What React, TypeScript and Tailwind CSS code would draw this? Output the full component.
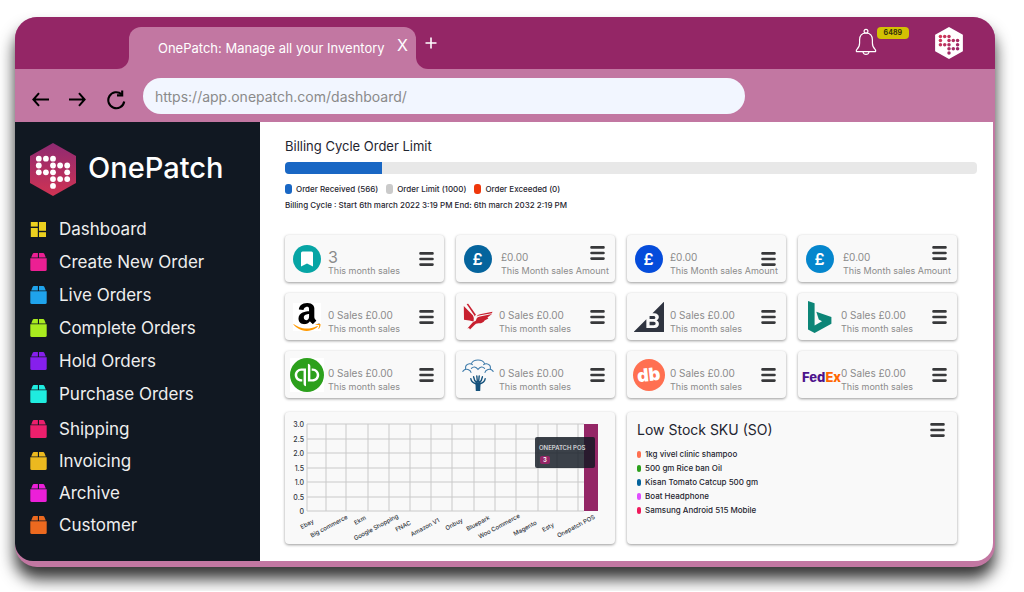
import type { ReactNode } from 'react';
import { FaAmazon } from 'react-icons/fa';
import { SiBigcommerce, SiQuickbooks } from 'react-icons/si';

type NavItem = { label: string; color: string };

type SalesCard = {
  id: string;
  icon: ReactNode;
  value: string;
  caption: string;
  big?: boolean;
  raised?: boolean;
};

const orderNav: NavItem[] = [
  { label: 'Create New Order', color: 'text-[#ec1f93]' },
  { label: 'Live Orders', color: 'text-[#1fa3ec]' },
  { label: 'Complete Orders', color: 'text-[#a9ec1f]' },
  { label: 'Hold Orders', color: 'text-[#861fec]' },
  { label: 'Purchase Orders', color: 'text-[#1fecdf]' },
];

const moreNav: NavItem[] = [
  { label: 'Shipping', color: 'text-[#ec1f6c]' },
  { label: 'Invoicing', color: 'text-[#ecb91f]' },
  { label: 'Archive', color: 'text-[#ec1fd8]' },
  { label: 'Customer', color: 'text-[#ec691f]' },
];

const legend = [
  { label: 'Order Received (566)', color: 'bg-[#1967c4]' },
  { label: 'Order Limit (1000)', color: 'bg-[#cacaca]' },
  { label: 'Order Exceeded (0)', color: 'bg-[#ef370b]' },
];

const lowStock = [
  { label: '1kg vivel clinic shampoo', color: 'bg-[#ff7051]' },
  { label: '500 gm Rice ban Oil', color: 'bg-[#2ca01c]' },
  { label: 'Kisan Tomato Catcup 500 gm', color: 'bg-[#05649d]' },
  { label: 'Boat Headphone', color: 'bg-[#e04dff]' },
  { label: 'Samsung Android 515 Mobile', color: 'bg-[#f01a5b]' },
];

// Dot positions (column, row) of the logo
const logoDots = [
  [0, 0], [1, 0], [2, 0],
  [0, 1], [2, 1], [3, 1], [4, 1],
  [0, 2], [1, 2], [2, 2], [4, 2],
  [2, 3], [3, 3], [4, 3],
  [2, 4],
];

function Logo({ className, inverted }: { className: string; inverted?: boolean }) {
  return (
    <svg className={className} viewBox="0 0 46 53" aria-hidden="true">
      <defs>
        <linearGradient id="brand" x1="0" y1="0" x2="0" y2="53" gradientUnits="userSpaceOnUse">
          <stop offset="0" stopColor="#8f2a72" />
          <stop offset="1" stopColor="#d03353" />
        </linearGradient>
        <linearGradient id="brandDots" x1="8" y1="12" x2="38" y2="40" gradientUnits="userSpaceOnUse">
          <stop offset="0" stopColor="#d63a57" />
          <stop offset="1" stopColor="#96266a" />
        </linearGradient>
      </defs>
      <polygon points="23,0 46,13 46,40 23,53 0,40 0,13" fill={inverted ? '#fff' : 'url(#brand)'} />
      <g fill={inverted ? 'url(#brandDots)' : '#fff'}>
        {logoDots.map(([col, row]) => (
          <circle key={`${col}-${row}`} cx={8.8 + col * 7.1} cy={15.7 + row * 6.8} r="2.9" />
        ))}
      </g>
    </svg>
  );
}

function BoxIcon() {
  return (
    <svg className="w-[17px] h-[18px]" viewBox="0 0 17 18" fill="currentColor" aria-hidden="true">
      <path d="M4 0H7.9V4.4H1.2L2.6 1.1Q3 0 4 0ZM9 0H13Q14 0 14.4 1.1L15.8 4.4H9Z" />
      <path d="M0.3 5.2H16.7V16.5Q16.7 18 15.2 18H1.8Q0.3 18 0.3 16.5Z" />
    </svg>
  );
}

function DashboardIcon() {
  return (
    <svg className="w-[17px] h-[17px]" viewBox="0 0 17 17" fill="currentColor" aria-hidden="true">
      <rect x="0.8" y="1" width="7" height="4.6" />
      <rect x="0.8" y="7" width="7" height="9" />
      <rect x="9" y="1" width="7" height="8.8" />
      <rect x="9" y="11.2" width="7" height="4.8" />
    </svg>
  );
}

function MenuButton({ label, className = '' }: { label: string; className?: string }) {
  return (
    <button type="button" aria-label={label} className={`shrink-0 ${className}`}>
      <svg className="w-[15px] h-[14px] block" viewBox="0 0 15 14" stroke="#38393b" strokeWidth="2.6" strokeLinecap="round">
        <path d="M1.5 1.4H13.5M1.5 7H13.5M1.5 12.6H13.5" />
      </svg>
    </button>
  );
}

function Pound({ color }: { color: string }) {
  return (
    <span className={`flex items-center justify-center w-7 h-7 rounded-full text-white text-base font-semibold ${color}`}>
      £
    </span>
  );
}

function AmazonLogo() {
  return (
    <span className="flex items-center justify-center w-7 h-7 bg-white">
      <svg width="0" height="0" className="absolute" aria-hidden="true">
        <linearGradient id="amazonFill" x1="0" y1="0" x2="0" y2="1">
          <stop offset="0.76" stopColor="#000" />
          <stop offset="0.76" stopColor="#f90" />
        </linearGradient>
      </svg>
      <FaAmazon size={32} fill="url(#amazonFill)" className="shrink-0" />
    </span>
  );
}

function BookBirdLogo() {
  return (
    <svg className="w-[30px] h-[28px]" viewBox="0 0 30 28" aria-hidden="true">
      <g fill="#c8202f">
        <path d="M0.8 3L10 12.4Q11.2 14 10.6 18.4L6.4 17.6L1 16.8Z" />
        <path d="M3.6 1L5.2 0.8L12.6 11.2L12 13.4Z" />
        <path d="M13 17.6Q13.4 14 17 13.4L29 11L24.4 14.4L25.4 15.6L21.6 17.4Q20 20.4 15.6 20.2Q12.6 20.2 11 22.4L7 26.4L6 25L4.4 25.4L9.6 19.6Z" />
        <path d="M13.6 13.4Q14.4 11.8 17 11.2L29.4 8.8L29 10.2L17.4 12.2Q15 12.6 13.6 13.4Z" />
      </g>
    </svg>
  );
}

function TreeLogo() {
  return (
    <svg className="w-8 h-8" viewBox="0 0 32 32" fill="none" strokeLinecap="round" aria-hidden="true">
      <g stroke="#3f7cab" strokeWidth="1.1">
        <path d="M0.8 12.4Q3 9.4 6 10.6Q8.6 11.6 9 13.4" />
        <path d="M3.6 9.6Q3 5.6 7.4 4.8Q9 4.6 10.4 5.6" />
        <path d="M9.4 4.6Q11 1 16 1Q21 1 22.6 4.6" />
        <path d="M21.6 5.6Q23 4.6 24.6 4.8Q29 5.6 28.4 9.6" />
        <path d="M31.2 12.4Q29 9.4 26 10.6Q23.4 11.6 23 13.4" />
        <path d="M9.4 9.4Q12.6 6.2 16 10.4Q19.4 6.2 22.6 9.4" />
      </g>
      <g stroke="#15527c" strokeWidth="1.4">
        <path d="M14.6 25Q9.4 23.6 8.8 19.6M15 24Q12 21.4 11.6 17.8M15.4 23L14.8 17M16.6 23L17.2 17M17 24Q20 21.4 20.4 17.8M17.4 25Q22.6 23.6 23.2 19.6" />
      </g>
      <path d="M13.4 23.4H18.6L18.2 32H13.8Z" fill="#15527c" />
    </svg>
  );
}

function BingLogo() {
  return (
    <svg className="w-6 h-8" viewBox="0 0 24 32" fill="#0c8577" aria-hidden="true">
      <path d="M0 0L6.6 2.3V24.5L14 20.2L10.8 18.6L8.3 10.8L23.4 16.1V22.7L6.6 32L0 28.4Z" />
    </svg>
  );
}

const cards: SalesCard[] = [
  {
    id: 'orders',
    icon: (
      <span className="flex items-center justify-center w-7 h-7 rounded-full bg-[#07a5a5]">
        <svg className="w-3 h-4" viewBox="0 0 12 16" fill="#fff" aria-hidden="true">
          <path d="M1.5 0.5H10.5Q12 0.5 12 2V15.5L6 12.5L0 15.5V2Q0 0.5 1.5 0.5Z" />
        </svg>
      </span>
    ),
    value: '3',
    caption: 'This month sales',
    big: true,
  },
  { id: 'amount-1', icon: <Pound color="bg-[#05649d]" />, value: '£0.00', caption: 'This Month sales Amount', raised: true },
  { id: 'amount-2', icon: <Pound color="bg-[#054cdb]" />, value: '£0.00', caption: 'This Month sales Amount' },
  { id: 'amount-3', icon: <Pound color="bg-[#0586cd]" />, value: '£0.00', caption: 'This Month sales Amount', raised: true },
  { id: 'amazon', icon: <AmazonLogo />, value: '0 Sales £0.00', caption: 'This month sales' },
  { id: 'books', icon: <BookBirdLogo />, value: '0 Sales £0.00', caption: 'This month sales' },
  { id: 'bigcommerce', icon: <SiBigcommerce size={30} color="#2f3440" />, value: '0 Sales £0.00', caption: 'This month sales' },
  { id: 'bing', icon: <BingLogo />, value: '0 Sales £0.00', caption: 'This month sales' },
  {
    id: 'quickbooks',
    icon: (
      <span className="bg-white">
        <SiQuickbooks size={34} color="#2ca01c" />
      </span>
    ),
    value: '0 Sales £0.00',
    caption: 'This month sales',
  },
  { id: 'tree', icon: <TreeLogo />, value: '0 Sales £0.00', caption: 'This month sales' },
  {
    id: 'db',
    icon: (
      <span className="flex items-center justify-center w-8 h-8 rounded-full bg-[#ff7051] text-white text-lg font-black">
        <span className="-rotate-6">db</span>
      </span>
    ),
    value: '0 Sales £0.00',
    caption: 'This month sales',
  },
  {
    id: 'fedex',
    icon: (
      <span className="pt-[7px] pl-1 text-[13px] font-extrabold text-[#4d148c]">
        Fed<span className="text-[#ff6600]">Ex</span>
      </span>
    ),
    value: '0 Sales £0.00',
    caption: 'This month sales',
  },
];

function Card({ card }: { card: SalesCard }) {
  return (
    <div className="flex items-center h-[47px] pr-[10px] rounded bg-[#f9f9f9] shadow-[0_1px_3px_rgba(0,0,0,0.4)]">
      <div className="flex items-center justify-center w-[43px] shrink-0">{card.icon}</div>
      <div className={`flex-1 min-w-0 pt-2 whitespace-nowrap text-[#8b8b8b] ${card.raised ? 'pl-[2px]' : ''}`}>
        <p className={card.big ? 'text-base leading-4' : 'text-[10px] leading-4'}>{card.value}</p>
        <p className="text-[9px] leading-3">{card.caption}</p>
      </div>
      <MenuButton label={`${card.id} options`} className={card.raised ? 'self-start mt-[11px]' : ''} />
    </div>
  );
}

const gridX = [22, 41, 61, 83, 104, 125, 146, 167, 189, 210, 231, 253, 272, 293];
const gridY = [
  { y: 12, label: '3.0' },
  { y: 27, label: '2.5' },
  { y: 41, label: '2.0' },
  { y: 56, label: '1.5' },
  { y: 70, label: '1.0' },
  { y: 85, label: '0.5' },
  { y: 99, label: '0' },
];
const channels = [
  { label: 'Ebay', x: 23, y: 112 },
  { label: 'Big commerce', x: 45, y: 114 },
  { label: 'Ekm', x: 76, y: 108 },
  { label: 'Google Shopping', x: 92, y: 115 },
  { label: 'FNAC', x: 119, y: 114 },
  { label: 'Amazon V1', x: 141, y: 115 },
  { label: 'Onbuy', x: 170, y: 112 },
  { label: 'Bluepark', x: 194, y: 111 },
  { label: 'Woo Commerce', x: 215, y: 114 },
  { label: 'Magento', x: 241, y: 116 },
  { label: 'Esty', x: 264, y: 115 },
  { label: 'Onepatch POS', x: 292, y: 114 },
];

function SalesChart() {
  return (
    <svg className="w-full block" viewBox="0 0 330 132" role="img" aria-label="Sales by channel">
      <g stroke="#c9c9c9" strokeWidth="1">
        {gridX.map((x) => (
          <line key={x} x1={x} x2={x} y1="12" y2="99" />
        ))}
        {gridY.map(({ y }) => (
          <line key={y} x1="22" x2="299" y1={y} y2={y} />
        ))}
      </g>
      <g fill="#30353d" fontSize="7" fontWeight="500" textAnchor="end">
        {gridY.map(({ y, label }) => (
          <text key={label} x="19" y={y + 3}>{label}</text>
        ))}
      </g>
      <g fill="#30353d" fontSize="6" fontWeight="500" textAnchor="middle">
        {channels.map(({ label, x, y }) => (
          <text key={label} transform={`translate(${x} ${y + 2}) rotate(-28)`}>{label}</text>
        ))}
      </g>
      <rect x="299" y="12" width="14" height="87" fill="#942666" />
      {/* Tooltip */}
      <rect x="250" y="25" width="60" height="31" rx="2" fill="#111822" fillOpacity="0.82" />
      <text x="254" y="38" fill="#e5e5e5" fontSize="6" fontWeight="500">ONEPATCH POS</text>
      <rect x="255" y="44" width="10" height="8" rx="2" fill="#942666" />
      <text x="260" y="50" fill="#fff" fontSize="6" fontWeight="600" textAnchor="middle">3</text>
    </svg>
  );
}

function NavLink({ label, icon }: { label: string; icon: ReactNode }) {
  return (
    <a href="#" className="flex items-center gap-3 text-[17px] leading-8 text-[#eeeeee]">
      {icon}
      {label}
    </a>
  );
}

export default function App() {
  return (
    <div className="pt-[17px] pl-[15px] pr-[29px] pb-6 bg-white font-['Inter',sans-serif]">
      <div className="rounded-[22px] overflow-hidden bg-[#c277a2] pb-[6px] shadow-[0_12px_16px_rgba(0,0,0,0.8)]">
        {/* Tab strip */}
        <header className="flex h-[52px] text-white">
          <div className="w-[114px] shrink-0 bg-[#942666] rounded-br-xl" />
          <div className="w-[287px] shrink-0 bg-[linear-gradient(#942666_50%,transparent_50%)] pt-[10px]">
            <div className="flex h-full pl-[29px] pr-2 rounded-t-xl bg-[#c277a2]">
              <span className="flex-1 pt-[11px] text-[13px] leading-5 whitespace-nowrap">OnePatch: Manage all your Inventory</span>
              <button type="button" aria-label="Close tab" className="self-start pt-2 text-base leading-5">X</button>
            </div>
          </div>
          <div className="flex flex-1 items-start bg-[#942666] rounded-bl-xl pl-[9px] pr-8">
            <button type="button" aria-label="New tab" className="pt-5">
              <svg className="w-3 h-3" viewBox="0 0 12 12" stroke="#fff" strokeWidth="1.6">
                <path d="M6 0.5V11.5M0.5 6H11.5" />
              </svg>
            </button>
            <button type="button" aria-label="Notifications" className="flex items-start ml-auto pt-[10px]">
              <svg className="w-[22px] h-[28px] mt-px" viewBox="0 0 22 28" fill="none" stroke="#fff" strokeWidth="1.2" strokeLinejoin="round">
                <circle cx="11" cy="3.2" r="1.9" />
                <path d="M11 5C6 5 4.6 8.6 4.6 12V15Q4.6 19 2 21.2Q1 22 1.4 23.6H20.6Q21 22 20 21.2Q17.4 19 17.4 15V12C17.4 8.6 16 5 11 5Z" />
                <path d="M8 24Q8.5 26.4 11 26.4Q13.5 26.4 14 24" />
              </svg>
              <span className="px-[7px] rounded bg-[#d3c103] text-[7px] leading-3 font-bold text-[#33300a]">6489</span>
            </button>
            <button type="button" aria-label="Account" className="ml-[26px] pt-[10px]">
              <Logo className="w-7 h-8" inverted />
            </button>
          </div>
        </header>

        {/* Address bar */}
        <div className="flex items-center h-[53px] pl-[17px] pr-[250px]">
          <div className="flex items-center gap-5 pt-2 pr-[17px]">
            <button type="button" aria-label="Back">
              <svg className="w-[17px] h-[15px]" viewBox="0 0 17 15" fill="none" stroke="#000" strokeWidth="2">
                <path d="M17 7.5H1.8M7 1.2L1.4 7.5L7 13.8" />
              </svg>
            </button>
            <button type="button" aria-label="Forward">
              <svg className="w-[17px] h-[15px]" viewBox="0 0 17 15" fill="none" stroke="#000" strokeWidth="2">
                <path d="M0 7.5H15.2M10 1.2L15.6 7.5L10 13.8" />
              </svg>
            </button>
            <button type="button" aria-label="Reload">
              <svg className="w-5 h-5" viewBox="0 0 20 20" fill="none" stroke="#000" strokeWidth="2.1">
                <path d="M15.6 4.2A8 8 0 1 0 18.2 11.5" />
                <path d="M16.2 0.5V5.4H11" />
              </svg>
            </button>
          </div>
          <input
            type="text"
            aria-label="Address"
            defaultValue="https://app.onepatch.com/dashboard/"
            className="flex-1 min-w-0 h-9 mt-px px-3 rounded-full bg-[#f2f6ff] text-sm text-[#8a8a8a] outline-none"
          />
        </div>

        <div className="flex">
          {/* Sidebar */}
          <aside className="w-[245px] shrink-0 pt-[21px] pl-[15px] bg-[#111822] rounded-bl-[18px]">
            <div className="flex items-center gap-3 text-white text-[29px] font-medium">
              <Logo className="w-[46px] h-[53px]" />
              <span className="pb-1">OnePatch</span>
            </div>
            <nav className="pt-[17px] pb-5">
              <ul>
                <li className="h-[33px]">
                  <NavLink label="Dashboard" icon={<span className="text-[#ecd01f]"><DashboardIcon /></span>} />
                </li>
                {orderNav.map((item) => (
                  <li key={item.label} className="h-[33px]">
                    <NavLink label={item.label} icon={<span className={item.color}><BoxIcon /></span>} />
                  </li>
                ))}
              </ul>
              <ul className="pt-[2px]">
                {moreNav.map((item) => (
                  <li key={item.label}>
                    <NavLink label={item.label} icon={<span className={item.color}><BoxIcon /></span>} />
                  </li>
                ))}
              </ul>
            </nav>
          </aside>

          {/* Dashboard */}
          <main className="flex-1 min-w-0 mr-[2px] pt-[14px] pl-[25px] pr-4 pb-4 bg-white rounded-br-[18px] text-[#1f2530]">
            <h1 className="text-[13px] leading-5">Billing Cycle Order Limit</h1>
            <div className="h-3 mt-[6px] rounded-sm bg-[#e8e8e8] overflow-hidden">
              <div className="h-full w-[14%] bg-[#1967c4]" />
            </div>
            <ul className="flex gap-2 mt-[9px] text-[8px] leading-3 font-medium">
              {legend.map((item) => (
                <li key={item.label} className="flex items-center gap-1">
                  <span className={`w-[7px] h-[10px] rounded-[3px] ${item.color}`} />
                  {item.label}
                </li>
              ))}
            </ul>
            <p className="mt-1 text-[8px] leading-3 font-medium">
              Billing Cycle : Start 6th march 2022 3:19 PM End: 6th march 2032 2:19 PM
            </p>

            <div className="pr-5">
              <div className="grid grid-cols-4 gap-x-3 gap-y-[11px] mt-6">
                {cards.map((card) => (
                  <Card key={card.id} card={card} />
                ))}
              </div>

              <div className="grid grid-cols-2 gap-3 mt-[14px]">
                <section className="rounded bg-[#f9f9f9] shadow-[0_1px_3px_rgba(0,0,0,0.4)]">
                  <SalesChart />
                </section>
                <section className="pt-2 pl-[10px] pr-3 rounded bg-[#f9f9f9] shadow-[0_1px_3px_rgba(0,0,0,0.4)]">
                  <div className="flex items-center justify-between">
                    <h2 className="text-sm leading-5">Low Stock SKU (SO)</h2>
                    <MenuButton label="Low stock options" />
                  </div>
                  <ul className="mt-[7px] text-[8px] leading-[14px] font-medium">
                    {lowStock.map((item) => (
                      <li key={item.label} className="flex items-center gap-1">
                        <span className={`w-1 h-[7px] rounded-sm ${item.color}`} />
                        {item.label}
                      </li>
                    ))}
                  </ul>
                </section>
              </div>
            </div>
          </main>
        </div>
      </div>
    </div>
  );
}
